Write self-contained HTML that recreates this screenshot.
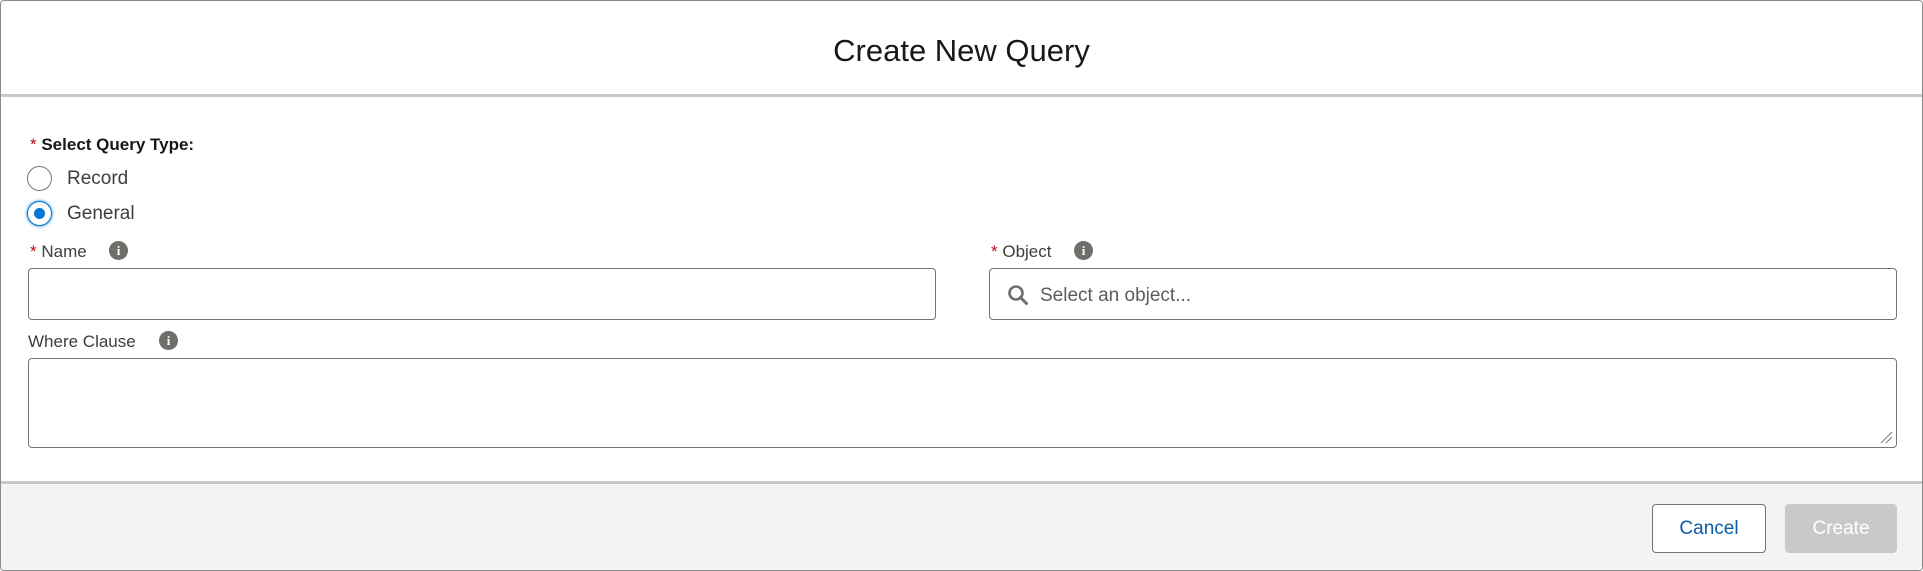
<!DOCTYPE html>
<html><head><meta charset="utf-8"><style>
*{box-sizing:border-box;margin:0;padding:0}
body{width:1923px;height:571px;overflow:hidden;background:#fff;font-family:"Liberation Sans",sans-serif;color:#181818;position:relative}
.modal{position:absolute;left:0;top:0;width:1923px;height:571px;border:1px solid #8a8a8a;border-radius:4px;overflow:hidden;background:#fff}
.abs{position:absolute}
.title{left:0;width:1921px;top:31px;text-align:center;font-size:31px;line-height:38px;color:#181818}
.hsep{left:0;width:1923px;top:93px;height:3px;background:#c9c9c9}
.req{color:#ba0517}
.lbl{font-size:17px;color:#3e3e3c;line-height:20px}
.radio{width:25px;height:25px;border:1px solid #747474;border-radius:50%;background:#fff}
.radio.on{border-color:#0176d3;box-shadow:0 0 3px #0176d3}
.radio.on::after{content:"";position:absolute;left:6px;top:6px;width:11px;height:11px;border-radius:50%;background:#0176d3}
.rt{font-size:19px;color:#3e3e3c;line-height:22px}
.info{width:19px;height:19px;border-radius:50%;background:#706e6b;color:#fff;font-size:13px;font-weight:bold;text-align:center;line-height:19px;font-family:"Liberation Serif",serif}
.inp{border:1px solid #747474;border-radius:4px;background:#fff}
.fsep{left:0;width:1923px;top:480px;height:3px;background:#c9c9c9}
.foot{left:0;width:1923px;top:483px;height:90px;background:#f3f3f3}
.btn{height:49px;border-radius:4px;font-size:19px;line-height:49px;text-align:center}
</style></head><body><div class="modal">
<div class="abs title">Create New Query</div>
<div class="abs hsep"></div>
<div class="abs lbl" style="left:29px;top:134px;font-weight:bold;color:#181818"><span class="req" style="font-weight:normal">*</span> Select Query Type:</div>
<div class="abs radio" style="left:26px;top:165px"></div>
<div class="abs rt" style="left:66px;top:167px">Record</div>
<div class="abs radio on" style="left:26px;top:200px"></div>
<div class="abs rt" style="left:66px;top:202px">General</div>
<div class="abs lbl" style="left:29px;top:241px"><span class="req">*</span> Name</div>
<div class="abs info" style="left:108px;top:240px">i</div>
<div class="abs inp" style="left:27px;top:267px;width:908px;height:52px"></div>
<div class="abs lbl" style="left:990px;top:241px"><span class="req">*</span> Object</div>
<div class="abs info" style="left:1073px;top:240px">i</div>
<div class="abs inp" style="left:988px;top:267px;width:908px;height:52px"></div>
<svg class="abs" style="left:1006px;top:283px" width="22" height="22" viewBox="0 0 22 22"><circle cx="9" cy="9" r="6.5" fill="none" stroke="#706e6b" stroke-width="2.6"/><line x1="13.5" y1="13.5" x2="19.5" y2="19.5" stroke="#706e6b" stroke-width="3" stroke-linecap="round"/></svg>
<div class="abs rt" style="left:1039px;top:284px;color:#5c5c5c;font-size:19px">Select an object...</div>
<div class="abs lbl" style="left:27px;top:331px">Where Clause</div>
<div class="abs info" style="left:158px;top:330px">i</div>
<div class="abs inp" style="left:27px;top:357px;width:1869px;height:90px"></div>
<svg class="abs" style="left:1878px;top:429px" width="14" height="14"><line x1="2" y1="13" x2="13" y2="2" stroke="#777" stroke-width="1"/><line x1="7" y1="13" x2="13" y2="7" stroke="#777" stroke-width="1"/></svg>
<div class="abs fsep"></div>
<div class="abs foot"></div>
<div class="abs btn" style="left:1651px;top:503px;width:114px;background:#fff;border:1px solid #747474;color:#0b5cab;line-height:47px">Cancel</div>
<div class="abs btn" style="left:1784px;top:503px;width:112px;background:#c9c9c9;color:#fff">Create</div>
</div></body></html>
